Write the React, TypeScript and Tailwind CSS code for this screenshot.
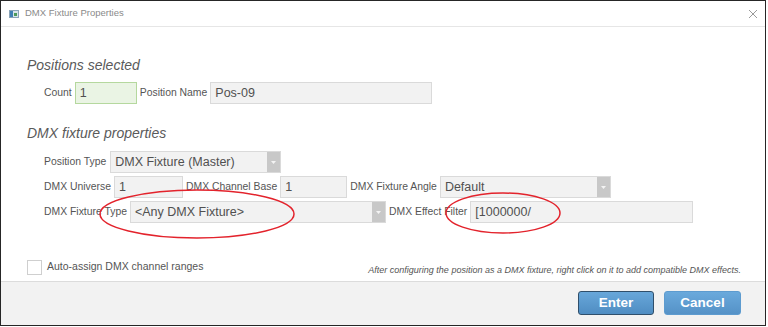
import React from "react";

const font = { fontFamily: '"Liberation Sans", Arial, sans-serif' };

function Label({ children }: { children: React.ReactNode }) {
  return <span className="text-[10.4px] text-[#555] whitespace-nowrap leading-none">{children}</span>;
}

function Field({ value, w, green }: { value: string; w: string; green?: boolean }) {
  return (
    <div
      className={`${w} h-[22px] flex items-center pl-[4px] text-[12.5px] text-[#505050] border ${
        green ? "bg-[#eaf4e4] border-[#b5d89e]" : "bg-[#f2f2f2] border-[#dadada]"
      }`}
    >
      {value}
    </div>
  );
}

function Select({ value, w }: { value: string; w: string }) {
  return (
    <div className={`${w} h-[22px] flex items-stretch bg-[#f2f2f2] border border-[#dadada]`}>
      <div className="flex-1 flex items-center pl-[4px] text-[12.5px] text-[#505050] whitespace-nowrap overflow-hidden">{value}</div>
      <div className="w-[13px] bg-[#c8c8c8] flex items-center justify-center">
        <svg width="5" height="3" viewBox="0 0 5 3">
          <path d="M0 0h5L2.5 3z" fill="#f4f4f4" />
        </svg>
      </div>
    </div>
  );
}

export default function App() {
  return (
    <div className="w-[768px] h-[327px] bg-white relative" style={font}>
      <div className="w-[766px] h-[326px] border border-[#262626] flex flex-col bg-white">
        {/* title bar */}
        <div className="h-[26px] flex items-center border-b border-[#e6e6e6] pl-[8px] pr-[6px]">
          <svg width="10" height="8" viewBox="0 0 10 8" className="mr-[6px]">
            <rect x="0" y="0" width="10" height="8" fill="#8aa4b8" />
            <rect x="1" y="1" width="3" height="6" fill="#3f7fb3" />
            <rect x="4" y="1" width="5" height="6" fill="#d7e4ea" />
            <rect x="5" y="3" width="3" height="3" fill="#4c9a5a" />
          </svg>
          <span className="text-[9.5px] text-[#8a8a8a]">DMX Fixture Properties</span>
          <svg width="10" height="10" viewBox="0 0 10 10" className="ml-auto mr-[1px]">
            <path d="M1 1l8 8M9 1l-8 8" stroke="#9a9a9a" strokeWidth="1" />
          </svg>
        </div>

        {/* body */}
        <div className="h-[254px] flex flex-col pl-[26px] pr-[24px]">
          <div className="mt-[30px] h-[16px] leading-[16px] text-[14px] italic text-[#5a5a5a]">Positions selected</div>
          <div className="mt-[9px] ml-[17px] flex items-center gap-[3px]">
            <Label>Count</Label>
            <Field value="1" w="w-[62px]" green />
            <Label>Position Name</Label>
            <Field value="Pos-09" w="w-[222px]" />
          </div>

          <div className="mt-[21px] h-[16px] leading-[16px] text-[14px] italic text-[#5a5a5a]">DMX fixture properties</div>
          <div className="mt-[10px] ml-[17px] flex flex-col gap-[3px]">
            <div className="flex items-center gap-[4px]">
              <Label>Position Type</Label>
              <Select value="DMX Fixture (Master)" w="w-[171px]" />
            </div>
            <div className="flex items-center gap-[3px]">
              <Label>DMX Universe</Label>
              <Field value="1" w="w-[69px]" />
              <Label>DMX Channel Base</Label>
              <Field value="1" w="w-[67px]" />
              <Label>DMX Fixture Angle</Label>
              <Select value="Default" w="w-[171px]" />
            </div>
            <div className="flex items-center gap-[3px]">
              <Label>DMX Fixture Type</Label>
              <Select value="<Any DMX Fixture>" w="w-[256px]" />
              <Label>DMX Effect Filter</Label>
              <Field value="[1000000/" w="w-[223px]" />
            </div>
          </div>

          <div className="mt-auto mb-[4px] flex items-center">
            <div className="w-[15px] h-[15px] border border-[#cfcfcf] bg-white" />
            <span className="ml-[5px] text-[10.5px] text-[#555]">Auto-assign DMX channel ranges</span>
            <span className="ml-auto mt-[6px] text-[9px] italic text-[#555]">
              After configuring the position as a DMX fixture, right click on it to add compatible DMX effects.
            </span>
          </div>
        </div>

        {/* footer */}
        <div className="flex-1 bg-[#f2f2f2] border-t border-[#dcdcdc] flex items-start justify-end gap-[10px] pt-[9px] pr-[24px]">
          <button className="w-[76px] h-[24px] rounded-[3px] border border-[#2f4f6b] bg-gradient-to-b from-[#68a7da] to-[#4f8dc2] text-white font-bold text-[13.5px]">
            Enter
          </button>
          <button className="w-[77px] h-[24px] rounded-[3px] border border-[#5d9bcf] bg-gradient-to-b from-[#6aa9dc] to-[#5592c7] text-white font-bold text-[13.5px]">
            Cancel
          </button>
        </div>
      </div>

      {/* annotation ellipses */}
      <svg className="absolute left-0 top-0 pointer-events-none" width="768" height="327">
        <ellipse cx="197" cy="214" rx="97" ry="24" fill="none" stroke="#e3232c" strokeWidth="1.5" />
        <ellipse cx="503" cy="213" rx="57" ry="20" fill="none" stroke="#e3232c" strokeWidth="1.5" />
      </svg>
    </div>
  );
}
